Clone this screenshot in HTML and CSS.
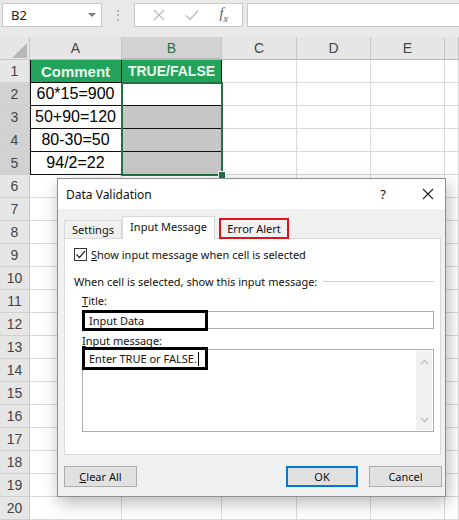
FILE: index.html
```html
<!DOCTYPE html>
<html lang="en">
<head>
  <meta charset="UTF-8" />
  <meta name="viewport" content="width=device-width, initial-scale=1.0" />
  <title>Data Validation - Input Message</title>
  <link rel="stylesheet" href="styles.css">
</head>
<body>
<div class="page">
  <!-- Name box + formula bar -->
  <div class="toolbar">
    <div class="name-box">
      <span>B2</span>
      <svg class="caret" width="8" height="5" viewBox="0 0 8 5"><path d="M0 0h8L4 4z" fill="#7a7a7a"/></svg>
    </div>
    <div class="grip">⋮</div>
    <div class="fx-box">
      <svg width="12" height="12" viewBox="0 0 12 12"><path d="M1 1l10 10M11 1L1 11" stroke="#bdbdbd" stroke-width="1.3" fill="none"/></svg>
      <svg width="14" height="12" viewBox="0 0 14 12"><path d="M1 6.5l4 4L13 1.5" stroke="#bdbdbd" stroke-width="1.4" fill="none"/></svg>
      <span class="fx">f<sub>x</sub></span>
    </div>
    <div class="formula-input"></div>
  </div>

  <!-- Sheet -->
  <div class="sheet">
    <div class="row head">
      <div class="rh corner"><svg width="16" height="15" viewBox="0 0 16 15"><path d="M16 0v15H1z" fill="#b7b7b7"/></svg></div>
      <div class="ch a">A</div>
      <div class="ch b sel">B</div>
      <div class="ch c">C</div>
      <div class="ch d">D</div>
      <div class="ch e">E</div>
      <div class="ch f"></div>
    </div>
    <div class="row">
      <div class="rh">1</div>
      <div class="cell a t g">Comment</div>
      <div class="cell b t g narrow">TRUE/FALSE</div>
      <div class="cell c"></div><div class="cell d"></div><div class="cell e"></div><div class="cell f"></div>
    </div>
    <div class="row">
      <div class="rh sel">2</div>
      <div class="cell a t">60*15=900</div>
      <div class="cell b t"></div>
      <div class="cell c"></div><div class="cell d"></div><div class="cell e"></div><div class="cell f"></div>
    </div>
    <div class="row">
      <div class="rh sel">3</div>
      <div class="cell a t">50+90=120</div>
      <div class="cell b t s"></div>
      <div class="cell c"></div><div class="cell d"></div><div class="cell e"></div><div class="cell f"></div>
    </div>
    <div class="row">
      <div class="rh sel">4</div>
      <div class="cell a t">80-30=50</div>
      <div class="cell b t s"></div>
      <div class="cell c"></div><div class="cell d"></div><div class="cell e"></div><div class="cell f"></div>
    </div>
    <div class="row">
      <div class="rh sel">5</div>
      <div class="cell a t">94/2=22</div>
      <div class="cell b t s"></div>
      <div class="cell c"></div><div class="cell d"></div><div class="cell e"></div><div class="cell f"></div>
    </div>
    <div class="row"><div class="rh">6</div><div class="cell a"></div><div class="cell b"></div><div class="cell c"></div><div class="cell d"></div><div class="cell e"></div><div class="cell f"></div></div>
    <div class="row"><div class="rh">7</div><div class="cell a"></div><div class="cell b"></div><div class="cell c"></div><div class="cell d"></div><div class="cell e"></div><div class="cell f"></div></div>
    <div class="row"><div class="rh">8</div><div class="cell a"></div><div class="cell b"></div><div class="cell c"></div><div class="cell d"></div><div class="cell e"></div><div class="cell f"></div></div>
    <div class="row"><div class="rh">9</div><div class="cell a"></div><div class="cell b"></div><div class="cell c"></div><div class="cell d"></div><div class="cell e"></div><div class="cell f"></div></div>
    <div class="row"><div class="rh">10</div><div class="cell a"></div><div class="cell b"></div><div class="cell c"></div><div class="cell d"></div><div class="cell e"></div><div class="cell f"></div></div>
    <div class="row"><div class="rh">11</div><div class="cell a"></div><div class="cell b"></div><div class="cell c"></div><div class="cell d"></div><div class="cell e"></div><div class="cell f"></div></div>
    <div class="row"><div class="rh">12</div><div class="cell a"></div><div class="cell b"></div><div class="cell c"></div><div class="cell d"></div><div class="cell e"></div><div class="cell f"></div></div>
    <div class="row"><div class="rh">13</div><div class="cell a"></div><div class="cell b"></div><div class="cell c"></div><div class="cell d"></div><div class="cell e"></div><div class="cell f"></div></div>
    <div class="row"><div class="rh">14</div><div class="cell a"></div><div class="cell b"></div><div class="cell c"></div><div class="cell d"></div><div class="cell e"></div><div class="cell f"></div></div>
    <div class="row"><div class="rh">15</div><div class="cell a"></div><div class="cell b"></div><div class="cell c"></div><div class="cell d"></div><div class="cell e"></div><div class="cell f"></div></div>
    <div class="row"><div class="rh">16</div><div class="cell a"></div><div class="cell b"></div><div class="cell c"></div><div class="cell d"></div><div class="cell e"></div><div class="cell f"></div></div>
    <div class="row"><div class="rh">17</div><div class="cell a"></div><div class="cell b"></div><div class="cell c"></div><div class="cell d"></div><div class="cell e"></div><div class="cell f"></div></div>
    <div class="row"><div class="rh">18</div><div class="cell a"></div><div class="cell b"></div><div class="cell c"></div><div class="cell d"></div><div class="cell e"></div><div class="cell f"></div></div>
    <div class="row"><div class="rh">19</div><div class="cell a"></div><div class="cell b"></div><div class="cell c"></div><div class="cell d"></div><div class="cell e"></div><div class="cell f"></div></div>
    <div class="row"><div class="rh">20</div><div class="cell a"></div><div class="cell b"></div><div class="cell c"></div><div class="cell d"></div><div class="cell e"></div><div class="cell f"></div></div>

    <!-- selected range B2:B5 -->
    <div class="selection"><span class="handle"></span></div>
  </div>

  <!-- Data Validation dialog -->
  <div class="dialog">
    <div class="dlg-title">
      <span class="dlg-name">Data Validation</span>
      <span class="dlg-help">?</span>
      <span class="dlg-close">
        <svg width="12" height="12" viewBox="0 0 12 12"><path d="M1 1l10 10M11 1L1 11" stroke="#222" stroke-width="1.1" fill="none"/></svg>
      </span>
    </div>
    <div class="dlg-body">
      <div class="tabs">
        <div class="tab">Settings</div>
        <div class="tab active">Input Message</div>
        <div class="tab marked">Error Alert</div>
      </div>
      <div class="panel">
        <div class="check-row">
          <span class="checkbox">
            <svg width="11" height="11" viewBox="0 0 11 11"><path d="M1.5 5.5l3 3L10 2" stroke="#222" stroke-width="1.2" fill="none"/></svg>
          </span>
          <span><u>S</u>how input message when cell is selected</span>
        </div>
        <div class="group-label">
          <span>When cell is selected, show this input message:</span>
          <span class="rule"></span>
        </div>
        <div class="field-label"><u>T</u>itle:</div>
        <div class="input">
          <span class="mark">Input Data</span>
        </div>
        <div class="field-label"><u>I</u>nput message:</div>
        <div class="textarea">
          <span class="mark tall">Enter TRUE or FALSE.<i class="cursor"></i></span>
          <div class="scrollbar">
            <svg width="9" height="6" viewBox="0 0 9 6"><path d="M1 5l3.5-3.5L8 5" stroke="#b8b8b8" stroke-width="1.2" fill="none"/></svg>
            <svg width="9" height="6" viewBox="0 0 9 6"><path d="M1 1l3.5 3.5L8 1" stroke="#b8b8b8" stroke-width="1.2" fill="none"/></svg>
          </div>
        </div>
      </div>
      <div class="dlg-buttons">
        <button class="btn"><u>C</u>lear All</button>
        <div class="btn-group">
          <button class="btn primary">OK</button>
          <button class="btn">Cancel</button>
        </div>
      </div>
    </div>
  </div>
</div>
</body>
</html>
```

FILE: styles.css
```css
body {
  margin: 0;
  padding: 0;
  background-color: #fff;
  font-family: 'Liberation Sans', Arial, sans-serif;
}
.page {
  position: relative;
  width: 459px;
  height: 520px;
  overflow: hidden;
}

/* formula bar */
.toolbar {
  display: flex;
  align-items: flex-start;
  height: 37px;
  box-sizing: border-box;
  padding: 3px 0 0 2px;
  background-color: #e9e9e9;
}
.name-box {
  display: flex;
  align-items: center;
  justify-content: space-between;
  box-sizing: border-box;
  width: 100px;
  height: 24px;
  padding: 0 5px 0 8px;
  background-color: #fff;
  border: 1px solid #c9c9c9;
  font-family: 'Noto Sans', sans-serif;
  font-size: 13px;
  color: #222;
}
.grip {
  width: 32px;
  text-align: center;
  line-height: 24px;
  color: #a8a8a8;
  font-size: 14px;
}
.fx-box {
  display: flex;
  align-items: center;
  justify-content: space-around;
  box-sizing: border-box;
  width: 109px;
  height: 24px;
  padding: 0 4px 0 8px;
  background-color: #fff;
  border: 1px solid #c9c9c9;
}
.fx {
  font-family: 'Liberation Serif', serif;
  font-style: italic;
  font-size: 14px;
  color: #555;
}
.fx sub {
  font-size: 10px;
}
.formula-input {
  flex: 1;
  height: 24px;
  margin-left: 4px;
  box-sizing: border-box;
  background-color: #fff;
  border: 1px solid #c9c9c9;
  border-right: none;
}

/* grid */
.sheet {
  position: relative;
}
.row {
  display: flex;
  height: 23px;
}
.rh, .a, .b, .c, .d, .e, .f {
  box-sizing: border-box;
  height: 23px;
}
.rh { width: 30px; }
.a { width: 92px; }
.b { width: 100px; }
.c { width: 75px; }
.d { width: 74px; }
.e { width: 74px; }
.f { flex: 1; }

.rh, .ch {
  display: flex;
  align-items: center;
  justify-content: center;
  background-color: #e6e6e6;
  color: #444;
  font-size: 14px;
  border-right: 1px solid #c6c6c6;
  border-bottom: 1px solid #d0d0d0;
}
.rh.sel {
  background-color: #d2d2d2;
  color: #444;
}
.ch.sel {
  background-color: #d2d2d2;
  color: #217346;
  border-bottom: 2px solid #217346;
}
.corner {
  align-items: flex-end;
  justify-content: flex-end;
  padding: 0 2px 1px 0;
  border-bottom-color: #c6c6c6;
}
.head .ch {
  border-bottom-color: #b9b9b9;
}

.cell {
  display: flex;
  align-items: center;
  justify-content: center;
  border-right: 1px solid #dadada;
  border-bottom: 1px solid #dadada;
  font-size: 16px;
  color: #000;
}
.cell.t {
  border-right-color: #111;
  border-bottom-color: #111;
}
.cell.a.t {
  box-shadow: inset 1px 0 #111;
}
.cell.g {
  background-color: #22a25a;
  color: #e9f7ec;
  font-weight: bold;
  font-size: 15px;
}
.cell.g.narrow {
  font-size: 14px;
}
.cell.s {
  background-color: #c6c6c6;
}
.selection {
  position: absolute;
  left: 121px;
  top: 45px;
  width: 102px;
  height: 94px;
  box-sizing: border-box;
  border: 2px solid #217346;
}
.handle {
  position: absolute;
  right: -5px;
  bottom: -5px;
  width: 6px;
  height: 6px;
  background-color: #217346;
  border: 1px solid #fff;
}

/* dialog */
.dialog {
  position: absolute;
  left: 57px;
  top: 178px;
  width: 389px;
  height: 319px;
  box-sizing: border-box;
  border: 1px solid #8e8e8e;
  background-color: #f0f0f0;
  box-shadow: 2px 6px 16px rgba(0, 0, 0, 0.28);
  font-family: 'Noto Sans', sans-serif;
  font-size: 11px;
  color: #111;
  white-space: nowrap;
}
.dlg-title {
  display: flex;
  align-items: center;
  height: 30px;
  padding-left: 8px;
  background-color: #fff;
  font-size: 12px;
}
.dlg-name {
  flex: 1;
}
.dlg-help {
  width: 20px;
  margin-right: 18px;
  text-align: center;
  font-size: 13px;
}
.dlg-close {
  display: flex;
  align-items: center;
  justify-content: center;
  width: 34px;
}
.dlg-body {
  padding: 7px 0 0 6px;
}
.tabs {
  display: flex;
  align-items: flex-end;
  height: 22px;
}
.tab {
  box-sizing: border-box;
  width: 58px;
  height: 18px;
  line-height: 17px;
  text-align: center;
  border: 1px solid #d9d9d9;
  border-bottom: none;
  background-color: #f0f0f0;
}
.tab.active {
  position: relative;
  width: 93px;
  height: 23px;
  margin-bottom: -1px;
  line-height: 20px;
  background-color: #fff;
  z-index: 1;
}
.tab.marked {
  position: relative;
  width: 70px;
  height: 21px;
  margin-left: 4px;
  margin-bottom: -1px;
  line-height: 17px;
  border: 2px solid #e0121c;
  z-index: 1;
}
.panel {
  box-sizing: border-box;
  width: 377px;
  height: 217px;
  padding: 0 6px 0 9px;
  background-color: #fff;
  border: 1px solid #d9d9d9;
}
.check-row {
  display: flex;
  align-items: center;
  gap: 4px;
  height: 16px;
  margin-top: 7px;
}
.checkbox {
  display: flex;
  align-items: center;
  justify-content: center;
  box-sizing: border-box;
  width: 13px;
  height: 13px;
  border: 1px solid #333;
}
.group-label {
  display: flex;
  align-items: center;
  gap: 6px;
  height: 16px;
  margin-top: 11px;
}
.rule {
  flex: 1;
  height: 1px;
  background-color: #d0d0d0;
}
.field-label {
  height: 16px;
  line-height: 16px;
  margin: 4px 0 0 8px;
}
.input {
  display: flex;
  box-sizing: border-box;
  height: 18px;
  margin: 2px 0 0 8px;
  border: 1px solid #ababab;
}
.mark {
  box-sizing: border-box;
  width: 126px;
  height: 21px;
  margin: -2px 0 0 -1px;
  padding-left: 4px;
  line-height: 15px;
  border: 3px solid #000;
}
.mark.tall {
  height: 23px;
  margin-top: -3px;
  line-height: 17px;
}
.cursor {
  display: inline-block;
  width: 1px;
  height: 14px;
  margin-left: 1px;
  vertical-align: -3px;
  background-color: #000;
}
.textarea {
  display: flex;
  justify-content: space-between;
  align-items: flex-start;
  box-sizing: border-box;
  height: 83px;
  margin-left: 8px;
  border: 1px solid #ababab;
}
.scrollbar {
  display: flex;
  flex-direction: column;
  align-items: center;
  justify-content: space-between;
  box-sizing: border-box;
  width: 16px;
  height: 79px;
  margin: 1px 1px 0 0;
  padding: 8px 0 7px;
  background-color: #f0f0f0;
}
.dlg-buttons {
  display: flex;
  justify-content: space-between;
  width: 378px;
  margin-top: 11px;
}
.btn-group {
  display: flex;
  gap: 11px;
}
.btn {
  box-sizing: border-box;
  width: 73px;
  height: 21px;
  padding: 0;
  background-color: #e1e1e1;
  border: 1px solid #adadad;
  font-family: 'Noto Sans', sans-serif;
  font-size: 11px;
  color: #111;
}
.btn.primary {
  width: 72px;
  border: 2px solid #0078d7;
}
```
